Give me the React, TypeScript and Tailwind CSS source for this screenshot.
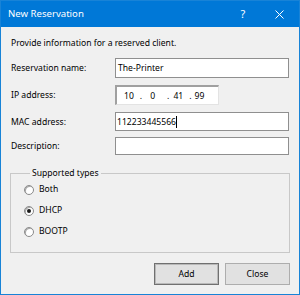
import React from 'react';

function Radio({ label, checked }: { label: string; checked?: boolean }) {
  return (
    <div className="flex items-center h-[21px]">
      <span className="w-[10px] h-[10px] rounded-full border border-[#8a8a8a] bg-white flex items-center justify-center shadow-[inset_1px_1px_0_#a8a8a8]">
        {checked && <span className="w-[4px] h-[4px] rounded-full bg-[#1a1a1a]" />}
      </span>
      <span className="ml-[5px] leading-none">{label}</span>
    </div>
  );
}

function Field({ label, children }: { label: string; children: React.ReactNode }) {
  return (
    <div className="flex items-center">
      <span className="w-[105px] pl-[1px]">{label}</span>
      {children}
    </div>
  );
}

export default function App() {
  return (
    <div className="w-[300px] h-[295px] border border-[#1883d7] bg-[#f0f0f0] flex flex-col select-none font-['Noto_Sans','Liberation_Sans',sans-serif]">
      {/* Title bar */}
      <div className="h-[26px] shrink-0 bg-[#0078d7] flex items-center pl-[7px] pr-[15px] text-white">
        <span className="text-[9.6px] flex-1 mt-[1px]">New Reservation</span>
        <span className="text-[11px] w-[8px] text-center">?</span>
        <svg className="ml-[28px]" width="9" height="9" viewBox="0 0 9 9">
          <path d="M0.5 0.5 L8.5 8.5 M8.5 0.5 L0.5 8.5" stroke="white" strokeWidth="1" />
        </svg>
      </div>

      <div className="flex-1 flex flex-col px-[9px] text-[8.6px] leading-[12px] text-black">
        <div className="mt-[10px] pl-[1px]">Provide information for a reserved client.</div>

        <div className="mt-[9px] flex flex-col gap-[7px]">
          <Field label="Reservation name:">
            <div className="w-[174px] h-[20px] bg-white border border-[#8f8f8f] flex items-center pl-[2px]">The-Printer</div>
          </Field>
          <Field label="IP address:">
            <div className="w-[104px] h-[20px] bg-white border-t-2 border-l-2 border-b border-r border-t-[#a0a0a0] border-l-[#a0a0a0] border-b-[#e3e3e3] border-r-[#e3e3e3] flex items-center">
              <span className="ml-[7px]">10</span>
              <span className="ml-[6px]">.</span>
              <span className="ml-[8px]">0</span>
              <span className="ml-[12px]">.</span>
              <span className="ml-[4px]">41</span>
              <span className="ml-[6px]">.</span>
              <span className="ml-[3px]">99</span>
            </div>
          </Field>
          <Field label="MAC address:">
            <div className="w-[174px] h-[19px] bg-white border border-[#8f8f8f] flex items-center pl-[1px]">
              112233445566<span className="w-[1px] h-[12px] bg-black" />
            </div>
          </Field>
          <div className="-mt-[1px]">
            <Field label="Description:">
              <div className="w-[174px] h-[18px] bg-white border border-[#8f8f8f]" />
            </Field>
          </div>
        </div>

        <fieldset className="mt-[12px] w-[280px] h-[86px] border border-[#c8c8c8] pl-[13px]">
          <legend className="ml-[6px] px-[2px]">Supported types</legend>
          <Radio label="Both" />
          <Radio label="DHCP" checked />
          <Radio label="BOOTP" />
        </fieldset>

        <div className="mt-[10px] flex justify-end gap-[6px]">
          <button className="w-[65px] h-[22px] bg-[#e1e1e1] border border-[#707070] shadow-[inset_0_0_0_1px_#b9b9b9] leading-none">Add</button>
          <button className="w-[65px] h-[22px] bg-[#e1e1e1] border border-[#adadad] leading-none">Close</button>
        </div>
      </div>
    </div>
  );
}
